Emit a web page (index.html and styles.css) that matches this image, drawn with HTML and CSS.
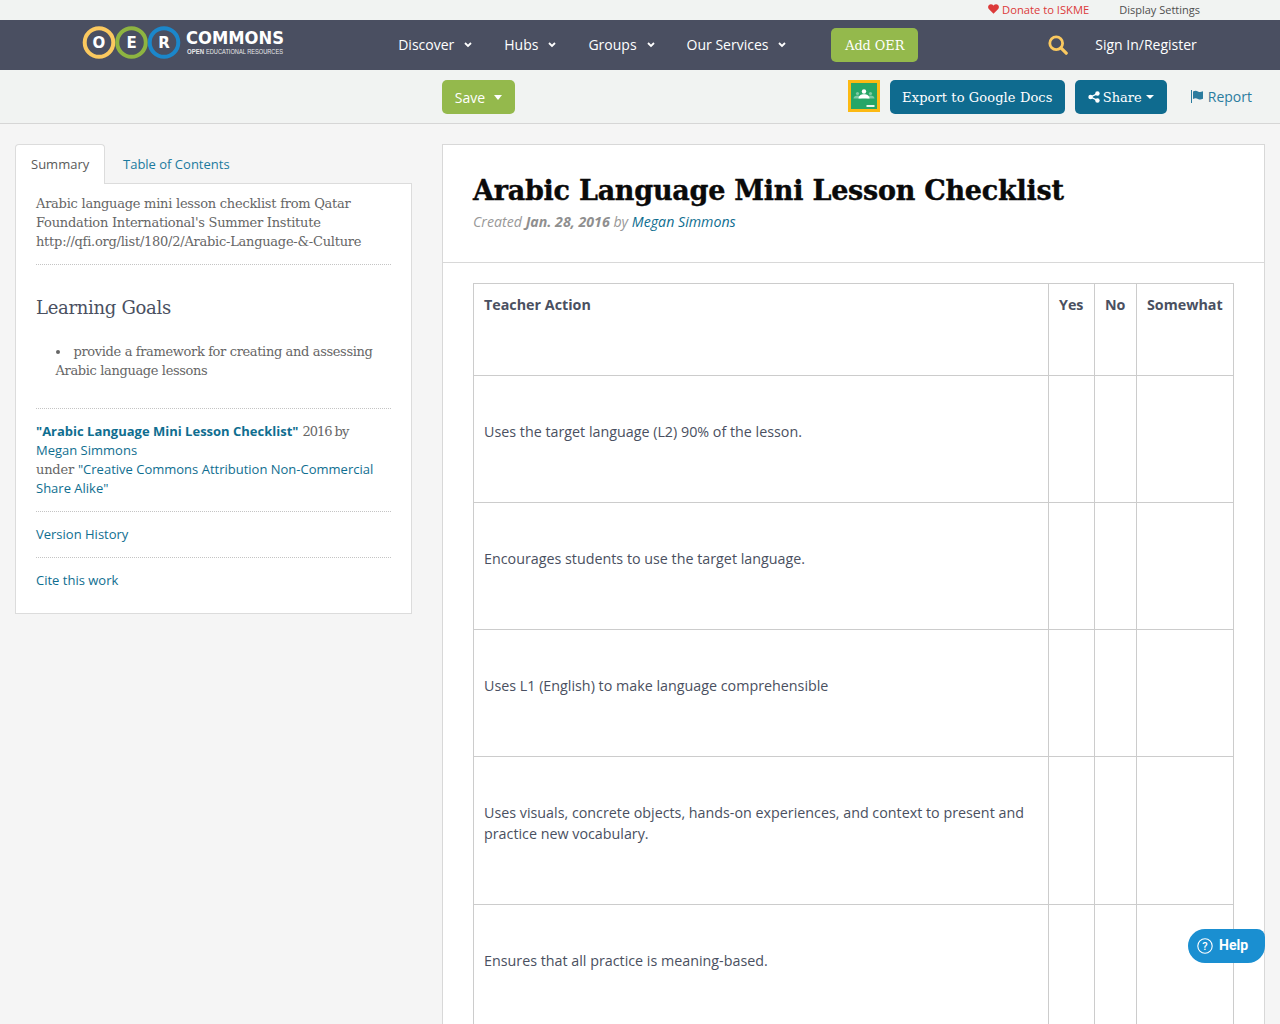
FILE: index.html
```html
<!DOCTYPE html>
<html lang="en">
<head>
<meta charset="utf-8">
<title>Arabic Language Mini Lesson Checklist</title>
<link rel="stylesheet" href="styles.css">
</head>
<body>
<div class="page">
  <div class="topbar">
    <a class="donate" href="#"><svg class="heart" viewBox="0 0 24 22"><path d="M12 21.500 2.200 11.600C-.6 8.700-.6 4.500 2 2 4.600-.4 8.800-.2 11 2.400L12 3.600l1-1.200C15.200-.2 19.400-.4 22 2c2.600 2.500 2.600 6.700-.2 9.600z"/></svg> Donate to ISKME</a>
    <a class="settings" href="#">Display Settings</a>
  </div>
  <nav class="nav">
    <a class="logo" href="#">
      <svg width="206" height="36" viewBox="0 0 206 36">
        <circle cx="17" cy="17.500" r="14.300" fill="none" stroke="#fbc95f" stroke-width="4"/>
        <circle cx="49.500" cy="17.500" r="14.300" fill="none" stroke="#8eb441" stroke-width="4"/>
        <circle cx="82" cy="17.500" r="14.300" fill="none" stroke="#1b87cb" stroke-width="4"/>
        <text class="logo-letter" x="17" y="23" text-anchor="middle">O</text>
        <text class="logo-letter" x="49.500" y="23" text-anchor="middle">E</text>
        <text class="logo-letter" x="82" y="23" text-anchor="middle">R</text>
        <text class="logo-word" x="104" y="18.500" textLength="98" lengthAdjust="spacingAndGlyphs">COMMONS</text>
        <text class="logo-sub logo-sub-bold" x="105" y="28.500" textLength="17" lengthAdjust="spacingAndGlyphs">OPEN</text>
        <text class="logo-sub" x="124" y="28.500" textLength="77" lengthAdjust="spacingAndGlyphs">EDUCATIONAL RESOURCES</text>
      </svg>
    </a>
    <ul class="menu">
      <li><a href="#">Discover<svg class="chev" viewBox="0 0 8 6"><path d="M1 1l3 3 3-3"/></svg></a></li>
      <li><a href="#">Hubs<svg class="chev" viewBox="0 0 8 6"><path d="M1 1l3 3 3-3"/></svg></a></li>
      <li><a href="#">Groups<svg class="chev" viewBox="0 0 8 6"><path d="M1 1l3 3 3-3"/></svg></a></li>
      <li><a href="#">Our Services<svg class="chev" viewBox="0 0 8 6"><path d="M1 1l3 3 3-3"/></svg></a></li>
    </ul>
    <a class="btn btn-green add" href="#">Add OER</a>
    <a class="search" href="#"><svg viewBox="0 0 20 20" width="20" height="20"><circle cx="8.200" cy="8.200" r="6.400" fill="none" stroke="#fbc95f" stroke-width="2.800"/><path d="M12.900 12.900l5.300 5.300" stroke="#fbc95f" stroke-width="3.200" stroke-linecap="round"/></svg></a>
    <a class="signin" href="#">Sign In/Register</a>
  </nav>
  <div class="toolbar">
    <a class="btn btn-green save" href="#">Save<span class="caret"></span></a>
    <div class="tools">
      <a class="classroom" href="#">
        <svg viewBox="0 0 26 26" width="26" height="26">
          <rect width="26" height="26" fill="#25a667"/>
          <circle cx="6.500" cy="10.500" r="1.600" fill="#7fcaa4"/><circle cx="19.500" cy="10.500" r="1.600" fill="#7fcaa4"/>
          <path d="M2.500 15.500c0-2 2-3 4-3s4 1 4 3zM15.500 15.500c0-2 2-3 4-3s4 1 4 3z" fill="#7fcaa4"/>
          <circle cx="13" cy="8.500" r="2.200" fill="#fff"/>
          <path d="M7.500 15.500c0-2.800 2.500-4.300 5.500-4.300s5.500 1.500 5.500 4.300z" fill="#fff"/>
          <rect x="15.500" y="22" width="8" height="2" fill="#e8f5ee"/>
        </svg>
      </a>
      <a class="btn btn-teal export" href="#">Export to Google Docs</a>
      <a class="btn btn-teal share" href="#"><svg class="share-icon" viewBox="0 0 14 14"><circle cx="11" cy="3" r="2.600"/><circle cx="11" cy="11" r="2.600"/><circle cx="3" cy="7" r="2.600"/><path d="M11 3 3 7l8 4" fill="none" stroke="#fff" stroke-width="1.500"/></svg>Share<span class="caret caret-sm"></span></a>
      <a class="report" href="#"><svg class="flag" viewBox="0 0 14 13"><path d="M1 0h1v13H1z"/><path d="M3 1.500c2-1 3.500-.8 5 0s3 .6 5-.2v7.500c-2 .9-3.500 1-5 .2s-3-1-5-.1z"/></svg><span>Report</span></a>
    </div>
  </div>
  <div class="content">
    <aside class="sidebar">
      <div class="tabs">
        <a class="tab active" href="#">Summary</a>
        <a class="tab" href="#">Table of Contents</a>
      </div>
      <div class="panel">
        <p class="summary serif">Arabic language mini lesson checklist from Qatar Foundation International's Summer Institute http://qfi.org/list/180/2/Arabic-Language-&amp;-Culture</p>
        <div class="goals">
          <h2 class="serif">Learning Goals</h2>
          <ul class="serif"><li>provide a framework for creating and assessing Arabic language lessons</li></ul>
        </div>
        <p class="license serif"><a class="strong" href="#">"Arabic Language Mini Lesson Checklist"</a> <span class="year">2016 by</span> <a href="#">Megan Simmons</a><br>under <a href="#">"Creative Commons Attribution Non-Commercial Share Alike"</a></p>
        <p class="side-link"><a href="#">Version History</a></p>
        <p class="side-link last"><a href="#">Cite this work</a></p>
      </div>
    </aside>
    <main class="main">
      <header class="head">
        <h1>Arabic Language Mini Lesson Checklist</h1>
        <p class="meta">Created <b>Jan. 28, 2016</b> by <a href="#">Megan Simmons</a></p>
      </header>
      <div class="body">
        <table>
          <colgroup><col class="c1"><col class="c2"><col class="c3"><col class="c4"></colgroup>
          <thead><tr><th>Teacher Action</th><th>Yes</th><th>No</th><th>Somewhat</th></tr></thead>
          <tbody>
            <tr><td>Uses the target language (L2) 90% of the lesson.</td><td></td><td></td><td></td></tr>
            <tr><td>Encourages students to use the target language.</td><td></td><td></td><td></td></tr>
            <tr><td>Uses L1 (English) to make language comprehensible</td><td></td><td></td><td></td></tr>
            <tr><td>Uses visuals, concrete objects, hands-on experiences, and context to present and practice new vocabulary.</td><td></td><td></td><td></td></tr>
            <tr><td>Ensures that all practice is meaning-based.</td><td></td><td></td><td></td></tr>
          </tbody>
        </table>
      </div>
    </main>
  </div>
  <a class="help" href="#"><svg viewBox="0 0 16 16" width="16" height="16"><circle cx="8" cy="8" r="7.200" fill="none" stroke="#fff" stroke-width="1.100"/><text class="help-q" x="8" y="11.800" text-anchor="middle">?</text></svg><span class="help-label">Help</span></a>
</div>
</body>
</html>
```
FILE: styles.css
```css
* { box-sizing: border-box; }
html, body { margin: 0; padding: 0; height: 100%; overflow: hidden; }
body { background: #f5f5f5; font-family: "Open Sans", sans-serif; font-size: 13px; color: #4a5061; }
a { text-decoration: none; color: #0f6e90; }
p { margin: 0; }
.page { height: 1024px; overflow: hidden; position: relative; }
.serif { font-family: "DejaVu Serif", serif; }

.topbar { height: 20px; background: #f1f3f2; display: flex; justify-content: flex-end; align-items: center; padding: 0 80px 2px 0; font-size: 11px; }
.donate { color: #dc3a3a; margin-right: 30px; display: flex; align-items: center; gap: 3px; font-size: 11.200px; }
.heart { width: 11px; height: 10px; fill: #dc3a3a; }
.settings { color: #4f4f4f; }

.nav { height: 50px; background: #4a4f61; display: flex; align-items: center; padding-left: 82px; }
.logo { width: 206px; height: 36px; display: block; margin-top: 8px; margin-right: 110.200px; }
.logo svg { display: block; margin-top: -6px; }
.logo-letter { font: 700 15px "DejaVu Sans", sans-serif; fill: #fff; }
.logo-word { font: 700 18px "DejaVu Sans", sans-serif; fill: #fff; }
.logo-sub { font: 400 7px "Liberation Sans", sans-serif; fill: #e8e8ea; }
.logo-sub-bold { font-weight: 700; }
.menu { list-style: none; margin: -2px 0 0; padding: 0; display: flex; gap: 32px; }
.menu a { color: #fff; font-size: 14px; display: flex; align-items: center; }
.chev { width: 8px; height: 6px; margin-left: 10px; fill: none; stroke: #fff; stroke-width: 1.800; margin-top: 2px; }
.btn { display: flex; align-items: center; justify-content: center; height: 34px; border-radius: 5px; color: #fff; }
.btn-green { background: #94b94c; }
.btn-teal { background: #0f6b8f; }
.add { width: 87px; margin-left: 44.800px; font-family: "DejaVu Serif", serif; font-size: 12.800px; }
.search { margin-left: 130px; display: block; height: 20px; }
.signin { color: #fff; font-size: 14px; margin: -2px 0 0 27px; }

.toolbar { height: 54px; background: #f1f3f2; border-bottom: 1px solid #d6d6d6; display: flex; align-items: flex-start; padding: 10px 28px 0 442px; }
.save { width: 73px; font-size: 14px; font-family: "Open Sans", sans-serif; }
.caret { width: 0; height: 0; border-left: 4.500px solid transparent; border-right: 4.500px solid transparent; border-top: 5px solid #fff; margin-left: 9px; }
.caret-sm { border-left-width: 4px; border-right-width: 4px; border-top-width: 4px; margin-left: 4px; }
.tools { margin-left: auto; display: flex; align-items: flex-start; }
.classroom { width: 32px; height: 32px; border: 3px solid #fcb913; display: block; margin-right: 10px; }
.classroom svg { display: block; }
.export { width: 175px; font-family: "DejaVu Serif", serif; font-size: 13px; letter-spacing: 0.1px; margin-right: 10px; }
.share { width: 92px; font-family: "DejaVu Serif", serif; font-size: 13px; margin-right: 23px; }
.share-icon { width: 12px; height: 12px; fill: #fff; margin-right: 3px; }
.report { height: 32px; display: flex; align-items: center; font-size: 14px; color: #2b7c9f; }
.flag { width: 14px; height: 13px; fill: #2b7c9f; margin-right: 4px; }

.content { display: flex; align-items: flex-start; gap: 30px; padding: 20px 15px 0; }
.sidebar { width: 397px; flex: none; }
.tabs { display: flex; height: 40px; position: relative; z-index: 1; }
.tab { padding: 10px 15px 0; height: 40px; font-size: 13px; color: #1b7a9e; margin-right: 2px; border: 1px solid transparent; border-bottom: 0; }
.tab.active { background: #fff; color: #5a5a5a; border-color: #dcdcdc; border-radius: 4px 4px 0 0; width: 90px; }
.panel { background: #fff; border: 1px solid #dcdcdc; margin-top: -1px; padding: 10px 20px 23px; height: 431px; color: #666; font-size: 13px; line-height: 19px; }
.summary { padding-bottom: 13px; border-bottom: 1px dotted #c4c4c4; letter-spacing: -0.25px; }
.goals { border-bottom: 1px dotted #c4c4c4; height: 144px; padding-top: 31px; }
.goals h2 { font-size: 18px; line-height: 24px; font-weight: 400; color: #4a5061; margin: 0 0 22px; letter-spacing: -0.3px; }
.goals ul { list-style-position: inside; margin: 0; padding: 0 0 0 19.500px; letter-spacing: -0.36px; }
.license { padding: 13px 0; border-bottom: 1px dotted #c4c4c4; letter-spacing: -0.2px; }
.license a { font-family: "Open Sans", sans-serif; font-size: 13px; letter-spacing: 0; line-height: 1; }
.license a.strong { font-weight: 700; }
.year { letter-spacing: -1px; }
.side-link { font-size: 13px; padding: 13px 0; border-bottom: 1px dotted #c4c4c4; }
.side-link.last { border-bottom: 0; }

.main { width: 823px; height: 1000px; flex: none; background: #fff; border: 1px solid #d8d8d8; }
.head { height: 118px; border-bottom: 1px solid #d8d8d8; padding: 27px 30px 0; }
.head h1 { margin: 0; font-family: "DejaVu Serif", serif; font-weight: 700; font-size: 27px; line-height: 38px; color: #0a0a0a; letter-spacing: -0.25px; -webkit-text-stroke: 0.4px #0a0a0a; }
.meta { font-size: 14.200px; line-height: 20px; font-style: italic; color: #999; margin-top: 2px; }
.meta b { color: #8f8f8f; }
.body { padding: 20px 30px 0; }
table { border-collapse: collapse; table-layout: fixed; width: 760px; font-size: 14.300px; line-height: 21px; color: #4a5061; }
.c1 { width: 575px; }
.c2 { width: 46px; }
.c3 { width: 42px; }
.c4 { width: 97px; }
th, td { border: 1px solid #ccc; text-align: left; vertical-align: top; }
th { padding: 10px 10px 60px; font-weight: 700; }
td { padding: 45px 10px 60px; }

.help { position: fixed; left: 1188px; top: 929px; width: 77px; height: 34px; background: #1a8fd1; border-radius: 17px 8px 17px 17px; display: flex; align-items: center; padding-left: 9px; gap: 6px; color: #fff; font: 700 14px Roboto, sans-serif; }
.help-label { margin-top: -2px; }
.help-q { font: 500 11px Roboto, sans-serif; fill: #fff; }
```
